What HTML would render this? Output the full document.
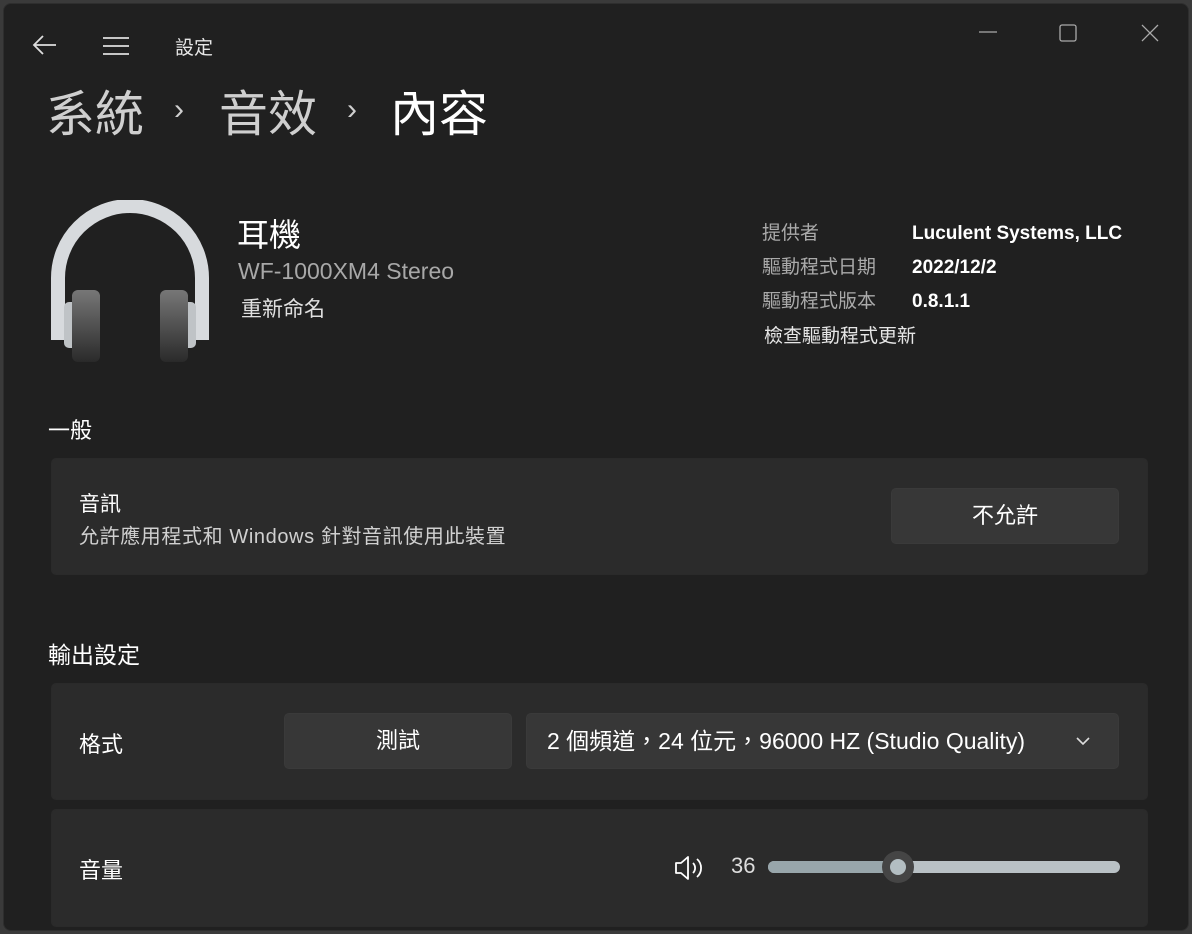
<!DOCTYPE html>
<html><head><meta charset="utf-8"><style>
*{margin:0;padding:0;box-sizing:border-box}
body{width:1192px;height:934px;background:#3a3a3a;overflow:hidden;font-family:"Segoe UI","Liberation Sans","Noto Sans CJK TC",sans-serif;color:#fff;position:relative}
.win{position:absolute;left:3px;top:3px;width:1186px;height:928px;background:#202020;border-radius:8px;border:1px solid #2e2e2e}
.a{position:absolute;white-space:nowrap}
.card{position:absolute;left:47px;width:1097px;background:#2b2b2b;border-radius:5px;border:1px solid #2a2a2a}
.btn{position:absolute;background:#373737;border-radius:5px;border:1px solid #3a3a3a;color:#fff;font-size:22px;text-align:center}
</style></head><body>
<div class="win">
<svg class="a" style="left:28px;top:30px" width="26" height="22" viewBox="0 0 26 22"><path d="M24 11H3M11 2L2 11l9 9" stroke="#ddd" stroke-width="1.8" fill="none"/></svg>
<svg class="a" style="left:98px;top:31px" width="28" height="22" viewBox="0 0 28 22"><path d="M1 3h26M1 11h26M1 19h26" stroke="#ddd" stroke-width="1.8"/></svg>
<div class="a" style="left:171px;top:29px;font-size:19px;color:#e6e6e6">設定</div>
<svg class="a" style="left:972px;top:20px" width="190" height="22" viewBox="0 0 190 22"><path d="M3 8h18" stroke="#aaa" stroke-width="1.3"/><rect x="84" y="1" width="16" height="16" rx="2" stroke="#aaa" stroke-width="1.3" fill="none"/><path d="M166 1l16 16M182 1l-16 16" stroke="#aaa" stroke-width="1.3"/></svg>
<div class="a" style="left:42px;top:71px;font-size:49px;color:#cfcfcf">系統</div>
<div class="a" style="left:170px;top:89px;font-size:30px;color:#cfcfcf">›</div>
<div class="a" style="left:215px;top:71px;font-size:49px;color:#cfcfcf">音效</div>
<div class="a" style="left:343px;top:89px;font-size:30px;color:#cfcfcf">›</div>
<div class="a" style="left:386px;top:71px;font-size:49px;color:#fff">內容</div>
<svg class="a" style="left:46px;top:196px" width="160" height="166" viewBox="0 0 160 166">
<defs><linearGradient id="g" x1="0" y1="0" x2="0" y2="1"><stop offset="0" stop-color="#777"/><stop offset="1" stop-color="#2a2a2a"/></linearGradient></defs>
<path d="M8 140V78a72 72 0 0 1 144 0v62" stroke="#d7dadd" stroke-width="14" fill="none"/>
<rect x="14" y="102" width="24" height="46" rx="5" fill="#bfc3c6"/><rect x="122" y="102" width="24" height="46" rx="5" fill="#bfc3c6"/>
<rect x="22" y="90" width="28" height="72" rx="6" fill="url(#g)"/><rect x="110" y="90" width="28" height="72" rx="6" fill="url(#g)"/>
</svg>
<div class="a" style="left:233px;top:206px;font-size:32px">耳機</div>
<div class="a" style="left:234px;top:254px;font-size:23px;color:#a8a8a8">WF-1000XM4 Stereo</div>
<div class="a" style="left:237px;top:289px;font-size:21px;color:#e0e0e0">重新命名</div>
<div class="a" style="left:758px;top:213px;font-size:19px;color:#aaa;line-height:34px">提供者<br>驅動程式日期<br>驅動程式版本</div>
<div class="a" style="left:908px;top:213px;font-size:19px;color:#fff;line-height:34px;font-weight:bold">Luculent Systems, LLC<br>2022/12/2<br>0.8.1.1</div>
<div class="a" style="left:760px;top:317px;font-size:19px;color:#e6e6e6">檢查驅動程式更新</div>
<div class="a" style="left:44px;top:409px;font-size:22px">一般</div>
<div class="card" style="top:454px;height:117px"></div>
<div class="a" style="left:75px;top:484px;font-size:21px">音訊</div>
<div class="a" style="left:75px;top:516px;font-size:20px;color:#d0d0d0;letter-spacing:0.6px">允許應用程式和 Windows 針對音訊使用此裝置</div>
<div class="btn" style="left:887px;top:484px;width:228px;height:56px;line-height:54px">不允許</div>
<div class="a" style="left:44px;top:632px;font-size:23px">輸出設定</div>
<div class="card" style="top:679px;height:117px"></div>
<div class="a" style="left:75px;top:723px;font-size:22px">格式</div>
<div class="btn" style="left:280px;top:709px;width:228px;height:56px;line-height:54px">測試</div>
<div class="btn" style="left:522px;top:709px;width:593px;height:56px;line-height:54px;text-align:left;padding-left:20px;font-size:23px">2 個頻道，24 位元，96000 HZ (Studio Quality)</div>
<svg class="a" style="left:1072px;top:732px" width="14" height="10" viewBox="0 0 14 10"><path d="M1 2l6 6 6-6" stroke="#ddd" stroke-width="1.6" fill="none"/></svg>
<div class="card" style="top:805px;height:118px"></div>
<div class="a" style="left:75px;top:849px;font-size:22px">音量</div>
<svg class="a" style="left:669px;top:850px" width="32" height="28" viewBox="0 0 32 28"><path d="M3 9h5l7-6v22l-7-6H3z" stroke="#fff" stroke-width="1.8" fill="none" stroke-linejoin="round"/><path d="M20 9a7 7 0 0 1 0 10M24 5a12 12 0 0 1 0 18" stroke="#fff" stroke-width="1.8" fill="none"/></svg>
<div class="a" style="left:727px;top:849px;font-size:22px;color:#ddd">36</div>
<div class="a" style="left:764px;top:857px;width:352px;height:12px;border-radius:6px;background:#b9c1c5"></div>
<div class="a" style="left:764px;top:857px;width:130px;height:12px;border-radius:6px;background:#98a6ab"></div>
<div class="a" style="left:878px;top:847px;width:32px;height:32px;border-radius:50%;background:#454545"></div>
<div class="a" style="left:886px;top:855px;width:16px;height:16px;border-radius:50%;background:#b3bec2"></div>
</div>
</body></html>
